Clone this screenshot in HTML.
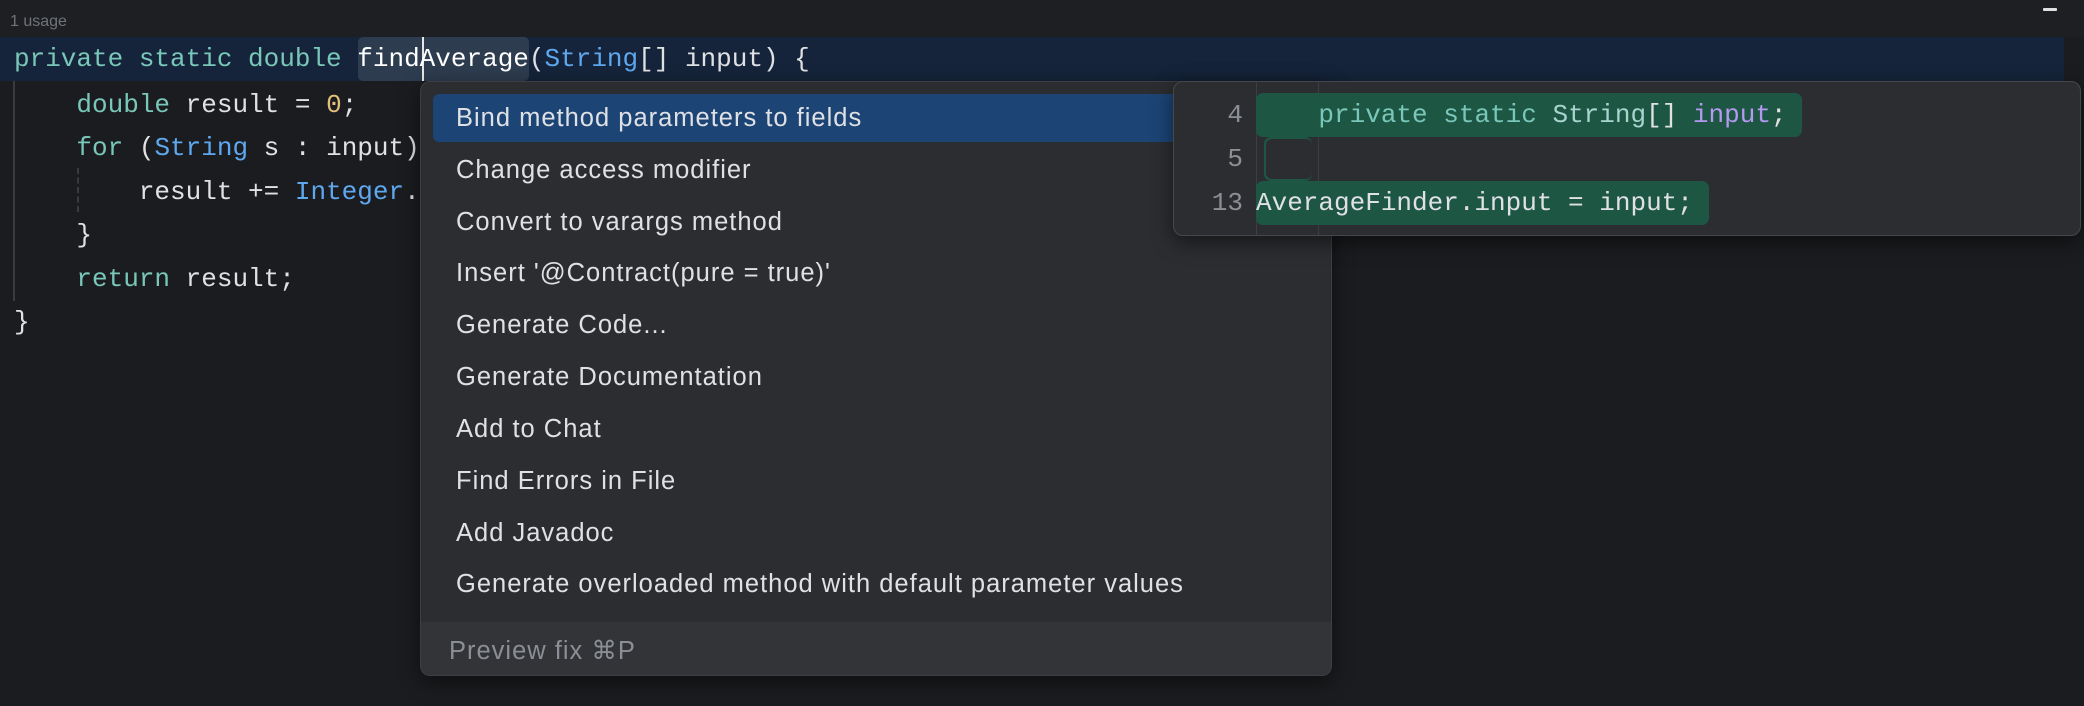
<!DOCTYPE html>
<html><head><meta charset="utf-8"><style>
*{margin:0;padding:0;box-sizing:border-box}
body{width:2084px;height:706px;background:#1b1c1f;overflow:hidden;position:relative;font-family:"Liberation Sans",sans-serif}
.code{position:absolute;left:14px;font-family:"Liberation Mono",monospace;font-size:26px;color:#dfe1e5;white-space:pre;line-height:44px;height:44px}
.k{color:#79c7b9}.t{color:#5ea8f0}.n{color:#e5c07b}
.menu{position:absolute;left:420px;top:81px;width:912px;height:595px;background:#2b2d30;border:1px solid #3c3e42;border-radius:10px;overflow:hidden;box-shadow:0 6px 20px rgba(0,0,0,.5)}
.item{position:absolute;left:35px;font-size:25.5px;letter-spacing:1px;color:#dfe1e5;line-height:30px}
.sel{position:absolute;left:12px;top:12px;width:900px;height:48px;background:#1c4475;border-radius:6px}
.foot{position:absolute;left:0;top:540px;width:912px;height:60px;background:#323438}
.prev{position:absolute;left:1173px;top:81px;width:908px;height:155px;background:#2b2d30;border:1px solid #45474a;border-radius:10px;overflow:hidden;box-shadow:0 6px 20px rgba(0,0,0,.5)}
.ln{position:absolute;width:69px;text-align:right;font-family:"Liberation Mono",monospace;font-size:26px;color:#8c8f94;line-height:44px}
.g{position:absolute;background:#1e5644;border-radius:7px}
.pc{position:absolute;font-family:"Liberation Mono",monospace;font-size:26px;white-space:pre;line-height:44px;color:#dfe1e5}
</style></head><body>
<div style="position:absolute;left:0;top:0;width:2084px;height:37px;background:#1e1f22"></div>
<div style="position:absolute;left:10px;top:13px;font-size:16px;color:#6f737a">1 usage</div>
<div style="position:absolute;left:2043px;top:8px;width:14px;height:3px;background:#e0e0e0;border-radius:1px"></div>
<div style="position:absolute;left:0;top:37px;width:2064px;height:44px;background:#15243a"></div>
<div style="position:absolute;left:358px;top:37px;width:171px;height:44px;background:#2d3c4f;border-radius:5px"></div>
<div style="position:absolute;left:422px;top:37px;width:2px;height:44px;background:#e6e6e6"></div>
<div style="position:absolute;left:13px;top:81px;width:2px;height:220px;background:#393b40"></div>
<div style="position:absolute;left:77px;top:168px;width:2px;height:44px;border-left:2px dashed #393b40"></div>
<div class="code" style="top:37px"><span class="k">private static double </span><b style="font-weight:normal;color:#fff">findAverage</b>(<span class="t">String</span>[] input) {</div>
<div class="code" style="top:83px">    <span class="k">double</span> result = <span class="n">0</span>;</div>
<div class="code" style="top:126px">    <span class="k">for</span> (<span class="t">String</span> s : input)</div>
<div class="code" style="top:170px">        result += <span class="t">Integer</span>.</div>
<div class="code" style="top:213px">    }</div>
<div class="code" style="top:257px">    <span class="k">return</span> result;</div>
<div class="code" style="top:300px">}</div>

<div class="menu">
<div class="sel"></div>
<div class="item" style="top:21px">Bind method parameters to fields</div>
<div class="item" style="top:73px">Change access modifier</div>
<div class="item" style="top:125px">Convert to varargs method</div>
<div class="item" style="top:176px">Insert '@Contract(pure = true)'</div>
<div class="item" style="top:228px">Generate Code...</div>
<div class="item" style="top:280px">Generate Documentation</div>
<div class="item" style="top:332px">Add to Chat</div>
<div class="item" style="top:384px">Find Errors in File</div>
<div class="item" style="top:436px">Add Javadoc</div>
<div class="item" style="top:487px">Generate overloaded method with default parameter values</div>
<div class="foot"></div>
<div class="item" style="top:554px;left:28px;color:#8b8e94">Preview fix ⌘P</div>
</div>

<div class="prev">
<div style="position:absolute;left:82px;top:0;width:1px;height:155px;background:#3c3e42"></div>
<div style="position:absolute;left:144px;top:0;width:1px;height:155px;background:#3c3e42"></div>
<div class="g" style="left:82px;top:11px;width:546px;height:44px"></div>
<div style="position:absolute;left:90px;top:55px;width:48px;height:44px;background:#1e5644;border-radius:7px"></div>
<div style="position:absolute;left:92px;top:57px;width:46px;height:40px;background:#2b2d30;border-radius:6px"></div>
<div class="g" style="left:82px;top:99px;width:453px;height:44px"></div>
<div class="ln" style="left:0;top:11px">4</div>
<div class="ln" style="left:0;top:55px">5</div>
<div class="ln" style="left:0;top:99px">13</div>
<div class="pc" style="left:82px;top:11px">    <span class="k">private static </span><span style="color:#a8d4ce">String</span>[] <span style="color:#b39af0">input</span>;</div>
<div class="pc" style="left:82px;top:99px">AverageFinder.input = input;</div>
</div>
</body></html>
